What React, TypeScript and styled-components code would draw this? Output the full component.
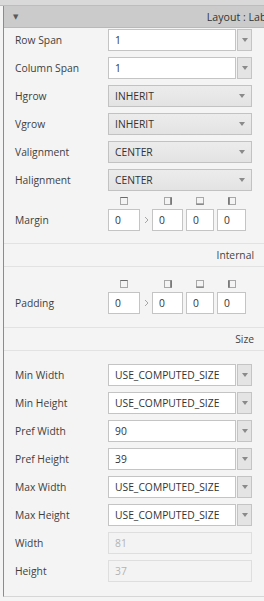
import React from "react";
import styled, { createGlobalStyle } from "styled-components";

const GlobalStyle = createGlobalStyle`
  html, body {
    margin: 0;
    padding: 0;
    background: #f4f4f4;
  }
  body {
    font-family: "Open Sans", "Noto Sans", "DejaVu Sans", sans-serif;
    font-size: 10.3px;
    color: #3e3e3e;
  }
  * { box-sizing: border-box; }
`;

const Page = styled.div`
  width: 264px;
  height: 601px;
  overflow: hidden;
  display: flex;
  flex-direction: column;
  background: #f4f4f4;
`;

const TopStrip = styled.div`
  height: 6px;
  flex: none;
  background: #d9d9d9;
  border-bottom: 1px solid #bdbdbd;
`;

const Panel = styled.div`
  margin-left: 3px;
  border-left: 1px solid #8c8c8c;
  border-bottom: 1px solid #d6d6d6;
  display: flex;
  flex-direction: column;
  height: 591px;
  flex: none;
`;

const Header = styled.div`
  height: 22px;
  flex: none;
  background: #cbcbcb;
  border-bottom: 1px solid #b9b9b9;
  display: flex;
  align-items: center;
  padding-left: 9px;
  overflow: hidden;
`;

const Caret = styled.span`
  font-size: 7px;
  color: #5a5a5a;
  line-height: 1;
`;

const Title = styled.span`
  margin-left: auto;
  margin-right: -11px;
  white-space: nowrap;
  font-size: 10.6px;
  color: #333;
`;

const Section = styled.div<{ $top: number; $bottom: number }>`
  display: flex;
  flex-direction: column;
  gap: 6px;
  padding: ${(p) => p.$top}px 0 ${(p) => p.$bottom}px 11px;
`;

const Row = styled.div<{ $tall?: boolean }>`
  display: grid;
  grid-template-columns: 93px 144px;
  align-items: ${(p) => (p.$tall ? "end" : "center")};
  min-height: 22px;
`;

const Label = styled.div`
  white-space: nowrap;
  line-height: 22px;
  color: #3e3e3e;
`;

const Combo = styled.div`
  display: flex;
  gap: 1px;
  height: 22px;
`;

const TextBox = styled.div<{ $disabled?: boolean }>`
  flex: 1;
  height: 22px;
  background: ${(p) => (p.$disabled ? "#f3f3f3" : "#ffffff")};
  border: 1px solid ${(p) => (p.$disabled ? "#dedede" : "#c4c4c4")};
  color: ${(p) => (p.$disabled ? "#b3b3b3" : "#333")};
  padding-left: 6px;
  line-height: 20px;
  white-space: nowrap;
  overflow: hidden;
`;

const DropButton = styled.div`
  width: 15px;
  flex: none;
  background: #e4e4e4;
  border: 1px solid #c4c4c4;
  display: flex;
  align-items: center;
  justify-content: center;
`;

const Arrow = styled.span`
  width: 0;
  height: 0;
  border-left: 3px solid transparent;
  border-right: 3px solid transparent;
  border-top: 4px solid #8a8a8a;
`;

const Choice = styled.div`
  height: 22px;
  background: linear-gradient(#ececec, #e3e3e3);
  border: 1px solid #c2c2c2;
  display: flex;
  align-items: center;
  justify-content: space-between;
  padding: 0 6px 0 6px;
  color: #333;
`;

const Insets = styled.div`
  display: grid;
  grid-template-columns: 32px 12px 31px 31px 32px;
  grid-template-rows: 8px 22px;
  row-gap: 4px;
  column-gap: 0;
`;

const IconCell = styled.div<{ $col: number }>`
  grid-row: 1;
  grid-column: ${(p) => p.$col};
  display: flex;
  justify-content: center;
  align-items: flex-end;
  margin-left: ${(p) => (p.$col > 3 ? 3 : 0)}px;
`;

const InsetBox = styled.div<{ $col: number }>`
  grid-row: 2;
  grid-column: ${(p) => p.$col};
  height: 22px;
  background: #fff;
  border: 1px solid #c4c4c4;
  padding-left: 6px;
  line-height: 20px;
  color: #333;
  margin-left: ${(p) => (p.$col > 3 ? 3 : 0)}px;
`;

const Chevron = styled.div`
  grid-row: 2;
  grid-column: 2;
  display: flex;
  align-items: center;
  justify-content: center;
`;

const SectionHeader = styled.div`
  height: 24px;
  border-top: 1px solid #e2e2e2;
  border-bottom: 1px solid #e2e2e2;
  display: flex;
  align-items: center;
  justify-content: flex-end;
  padding-right: 10px;
  color: #444;
`;

type Side = "top" | "right" | "bottom" | "left";

const SideIcon = ({ side }: { side: Side }) => {
  const lines: Record<Side, [number, number, number, number]> = {
    top: [0.5, 0.5, 7.5, 0.5],
    right: [7, 0.5, 7, 7.5],
    bottom: [0.5, 7, 7.5, 7],
    left: [1, 0.5, 1, 7.5],
  };
  const [x1, y1, x2, y2] = lines[side];
  return (
    <svg width="8" height="8" viewBox="0 0 8 8">
      <rect x="0.5" y="0.5" width="7" height="7" fill="none" stroke="#a8a8a8" strokeWidth="1" />
      <line
        x1={x1}
        y1={y1}
        x2={x2}
        y2={y2}
        stroke="#6a6a6a"
        strokeWidth={side === "top" || side === "bottom" ? 1 : 1.5}
      />
    </svg>
  );
};

const ChevronIcon = () => (
  <svg width="5" height="8" viewBox="0 0 5 8">
    <polyline points="1,1 4,4 1,7" fill="none" stroke="#a6a6a6" strokeWidth="1" />
  </svg>
);

const ComboRow = ({ label, value }: { label: string; value: string }) => (
  <Row>
    <Label>{label}</Label>
    <Combo>
      <TextBox>{value}</TextBox>
      <DropButton>
        <Arrow />
      </DropButton>
    </Combo>
  </Row>
);

const ChoiceRow = ({ label, value }: { label: string; value: string }) => (
  <Row>
    <Label>{label}</Label>
    <Choice>
      <span>{value}</span>
      <Arrow />
    </Choice>
  </Row>
);

const DisabledRow = ({ label, value }: { label: string; value: string }) => (
  <Row>
    <Label>{label}</Label>
    <Combo>
      <TextBox $disabled>{value}</TextBox>
    </Combo>
  </Row>
);

const InsetsRow = ({ label }: { label: string }) => {
  const sides: Side[] = ["top", "right", "bottom", "left"];
  const cols = [1, 3, 4, 5];
  return (
    <Row $tall>
      <Label>{label}</Label>
      <Insets>
        {sides.map((s, i) => (
          <IconCell key={s} $col={cols[i]}>
            <SideIcon side={s} />
          </IconCell>
        ))}
        {cols.map((c) => (
          <InsetBox key={c} $col={c}>
            0
          </InsetBox>
        ))}
        <Chevron>
          <ChevronIcon />
        </Chevron>
      </Insets>
    </Row>
  );
};

export default function App() {
  return (
    <Page>
      <GlobalStyle />
      <TopStrip />
      <Panel>
        <Header>
          <Caret>▼</Caret>
          <Title>Layout : Label</Title>
        </Header>
        <Section $top={1} $bottom={12}>
          <ComboRow label="Row Span" value="1" />
          <ComboRow label="Column Span" value="1" />
          <ChoiceRow label="Hgrow" value="INHERIT" />
          <ChoiceRow label="Vgrow" value="INHERIT" />
          <ChoiceRow label="Valignment" value="CENTER" />
          <ChoiceRow label="Halignment" value="CENTER" />
          <InsetsRow label="Margin" />
        </Section>
        <SectionHeader>Internal</SectionHeader>
        <Section $top={13} $bottom={13}>
          <InsetsRow label="Padding" />
        </Section>
        <SectionHeader>Size</SectionHeader>
        <Section $top={13} $bottom={11}>
          <ComboRow label="Min Width" value="USE_COMPUTED_SIZE" />
          <ComboRow label="Min Height" value="USE_COMPUTED_SIZE" />
          <ComboRow label="Pref Width" value="90" />
          <ComboRow label="Pref Height" value="39" />
          <ComboRow label="Max Width" value="USE_COMPUTED_SIZE" />
          <ComboRow label="Max Height" value="USE_COMPUTED_SIZE" />
          <DisabledRow label="Width" value="81" />
          <DisabledRow label="Height" value="37" />
        </Section>
      </Panel>
    </Page>
  );
}
